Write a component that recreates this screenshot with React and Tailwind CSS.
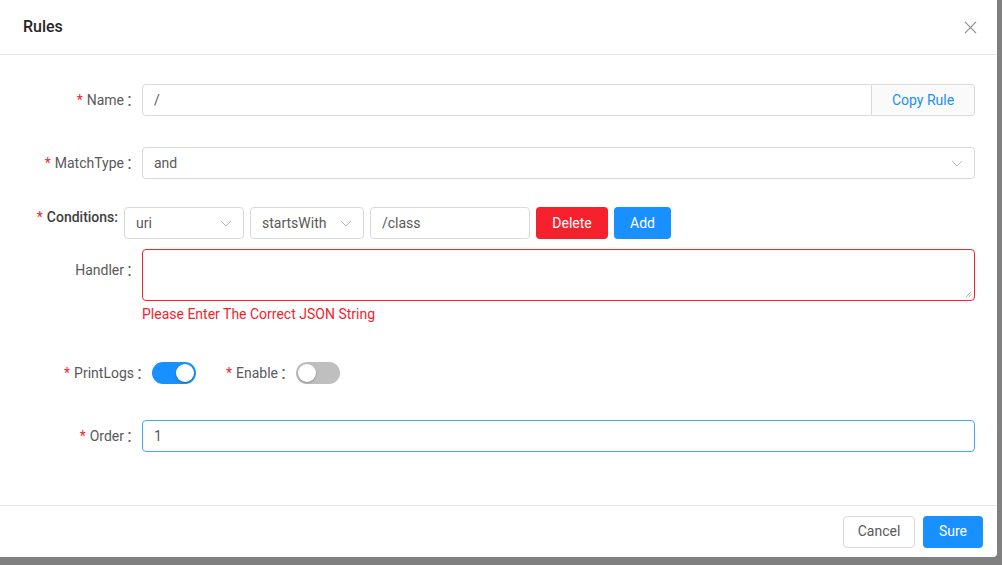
import React from 'react';

const font = { fontFamily: 'Roboto, "Liberation Sans", "Noto Sans CJK SC", sans-serif' };

// thin chevron used by the selects
const Arrow = ({ className = '' }) => (
  <svg viewBox="0 0 12 12" className={`w-3 h-3 ${className}`} fill="none" stroke="#bfbfbf" strokeWidth="1">
    <path d="M1 4l5 5 5-5" />
  </svg>
);

const Label = ({ required, children, className = '' }) => (
  <div className={`text-[14px] text-[#595959] whitespace-nowrap ${className}`}>
    {required && <span className="text-[#f5222d] mr-1">*</span>}
    {children}
    <span className="ml-[2px] mr-[2px]">：</span>
  </div>
);

const Switch = ({ on }) => (
  <div className={`w-[44px] h-[22px] rounded-full flex items-center px-[2px] ${on ? 'bg-[#1890ff] justify-end' : 'bg-[#bfbfbf] justify-start'}`}>
    <div className="w-[18px] h-[18px] rounded-full bg-white shadow-[0_1px_2px_rgba(0,35,11,0.3)]" />
  </div>
);

export default function App() {
  return (
    <div className="w-[1002px] h-[565px] bg-[#808080] overflow-hidden" style={font}>
      <div className="w-[997px] h-[557px] bg-white rounded-br-[4px] flex flex-col">
        {/* header */}
        <div className="h-[55px] border-b border-[#e8e8e8] flex items-center justify-between pl-[23px] pr-[20px] shrink-0">
          <div className="text-[16px] font-medium text-[#262626]">Rules</div>
          <svg viewBox="0 0 14 14" className="w-[13px] h-[13px]" fill="none" stroke="#8c8c8c" strokeWidth="1.2">
            <path d="M1 1l12 12M13 1L1 13" />
          </svg>
        </div>

        {/* body */}
        <div className="flex-1 pt-[29px] pr-[22px]">
          {/* Name */}
          <div className="flex items-center h-[32px]">
            <div className="w-[142px] flex justify-end"><Label required>Name</Label></div>
            <div className="flex-1 flex h-[32px]">
              <div className="flex-1 border border-[#d9d9d9] rounded-l-[4px] flex items-center px-[11px] text-[14px] text-[#595959]">/</div>
              <div className="w-[103px] border border-l-0 border-[#d9d9d9] rounded-r-[4px] bg-[#fafafa] flex items-center justify-center text-[14px] text-[#1890ff]">Copy Rule</div>
            </div>
          </div>

          {/* MatchType */}
          <div className="flex items-center h-[32px] mt-[31px]">
            <div className="w-[142px] flex justify-end"><Label required>MatchType</Label></div>
            <div className="flex-1 h-[32px] border border-[#d9d9d9] rounded-[4px] flex items-center justify-between px-[11px] text-[14px] text-[#595959]">
              <span>and</span>
              <Arrow />
            </div>
          </div>

          {/* Conditions */}
          <div className="flex items-start h-[32px] mt-[28px]">
            <div className="w-[118px] text-right text-[14px] font-medium text-[#404040] whitespace-nowrap">
              <span className="text-[#f5222d] mr-1 font-normal">*</span>Conditions:
            </div>
            <div className="ml-[6px] flex gap-[6px]">
              <div className="w-[120px] h-[32px] border border-[#d9d9d9] rounded-[4px] flex items-center justify-between px-[11px] text-[14px] text-[#595959]">
                <span>uri</span><Arrow />
              </div>
              <div className="w-[114px] h-[32px] border border-[#d9d9d9] rounded-[4px] flex items-center justify-between px-[11px] text-[14px] text-[#595959]">
                <span>startsWith</span><Arrow />
              </div>
              <div className="w-[160px] h-[32px] border border-[#d9d9d9] rounded-[4px] flex items-center px-[11px] text-[14px] text-[#595959]">/class</div>
              <div className="w-[72px] h-[32px] rounded-[4px] bg-[#f5222d] text-white text-[14px] flex items-center justify-center">Delete</div>
              <div className="w-[57px] h-[32px] rounded-[4px] bg-[#1890ff] text-white text-[14px] flex items-center justify-center">Add</div>
            </div>
          </div>

          {/* Handler */}
          <div className="flex items-start mt-[10px]">
            <div className="w-[142px] flex justify-end pt-[11px]"><Label>Handler</Label></div>
            <div className="flex-1">
              <div className="h-[52px] border border-[#f5222d] rounded-[4px] relative">
                <svg viewBox="0 0 8 8" className="absolute right-[2px] bottom-[2px] w-[7px] h-[7px]" stroke="#8c8c8c" strokeWidth="0.8">
                  <path d="M1 7L7 1M4 7L7 4" />
                </svg>
              </div>
              <div className="text-[14px] text-[#f5222d] leading-[22px] mt-[2px]">Please Enter The Correct JSON String</div>
            </div>
          </div>

          {/* switches */}
          <div className="flex items-center h-[22px] mt-[37px]">
            <div className="w-[152px] flex justify-end"><Label required>PrintLogs</Label></div>
            <Switch on />
            <div className="w-[100px] flex justify-end"><Label required>Enable</Label></div>
            <Switch />
          </div>

          {/* Order */}
          <div className="flex items-center h-[32px] mt-[36px]">
            <div className="w-[142px] flex justify-end"><Label required>Order</Label></div>
            <div className="flex-1 h-[32px] border border-[#40a9ff] rounded-[4px] flex items-center px-[11px] text-[14px] text-[#595959]">1</div>
          </div>
        </div>

        {/* footer */}
        <div className="h-[52px] border-t border-[#e8e8e8] flex items-center justify-end gap-[8px] pr-[14px] shrink-0">
          <div className="w-[72px] h-[32px] border border-[#d9d9d9] rounded-[4px] flex items-center justify-center text-[14px] text-[#595959]">Cancel</div>
          <div className="w-[60px] h-[32px] rounded-[4px] bg-[#1890ff] flex items-center justify-center text-[14px] text-white">Sure</div>
        </div>
      </div>
    </div>
  );
}
